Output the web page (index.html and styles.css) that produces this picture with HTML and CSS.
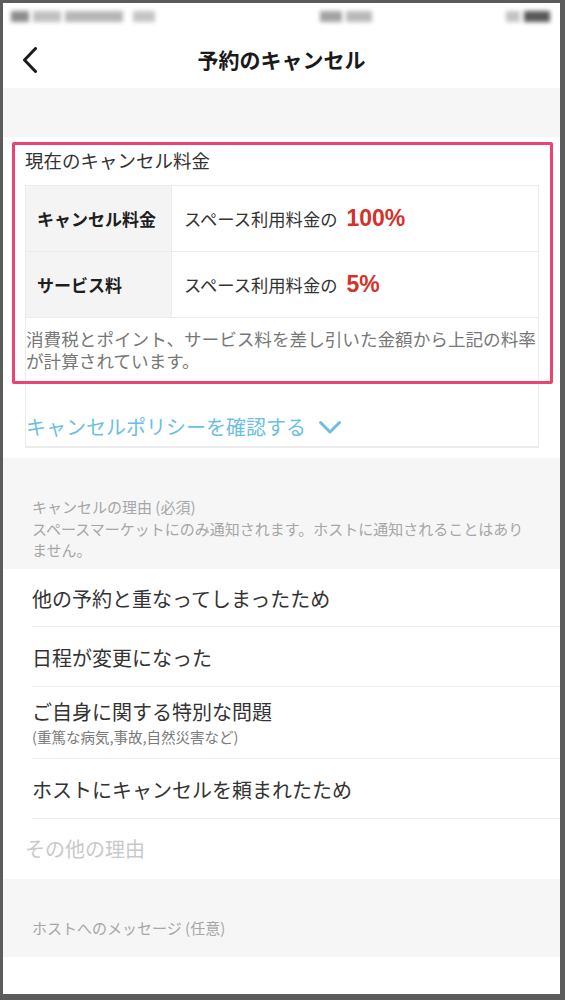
FILE: index.html
```html
<!DOCTYPE html>
<html lang="ja">
<head>
<meta charset="utf-8">
<title>予約のキャンセル</title>
<link rel="stylesheet" href="styles.css">
</head>
<body>
<div class="screen">
  <div class="statusbar">
    <div class="sb-group">
      <span class="blob b1"></span><span class="blob b2"></span><span class="blob b3"></span><span class="blob b4"></span>
    </div>
    <div class="sb-group">
      <span class="blob c1"></span><span class="blob c2"></span>
    </div>
    <div class="sb-group">
      <span class="blob r1"></span><span class="blob r2"></span>
    </div>
  </div>

  <div class="navbar">
    <svg class="back" width="16" height="26" viewBox="0 0 16 26"><path d="M13.5 1.5 L2.5 13 L13.5 24.5" fill="none" stroke="#1c1c1c" stroke-width="3" stroke-linecap="round" stroke-linejoin="round"/></svg>
    <div class="nav-title">予約のキャンセル</div>
  </div>

  <div class="spacer-top"></div>

  <section class="fee-section">
    <h2 class="fee-title">現在のキャンセル料金</h2>
    <div class="fee-box">
      <div class="fee-table">
        <div class="cell label">キャンセル料金</div>
        <div class="cell value">スペース利用料金の<span class="pct">100%</span></div>
        <div class="cell label">サービス料</div>
        <div class="cell value">スペース利用料金の<span class="pct">5%</span></div>
      </div>
      <p class="fee-note">消費税とポイント、サービス料を差し引いた金額から上記の料率が計算されています。</p>
      <div class="policy-link">
        <span>キャンセルポリシーを確認する</span>
        <svg class="chev" width="24" height="15" viewBox="0 0 24 15"><path d="M2.5 2.5 L12 12 L21.5 2.5" fill="none" stroke="#6bbfe3" stroke-width="3" stroke-linecap="round" stroke-linejoin="round"/></svg>
      </div>
    </div>
    <div class="highlight"></div>
  </section>

  <div class="group-header reason-header">
    <div>キャンセルの理由 (必須)</div>
    <div>スペースマーケットにのみ通知されます。ホストに通知されることはありません。</div>
  </div>

  <ul class="reason-list">
    <li class="reason"><span class="reason-text">他の予約と重なってしまったため</span></li>
    <li class="reason"><span class="reason-text">日程が変更になった</span></li>
    <li class="reason tall"><span class="reason-text">ご自身に関する特別な問題</span><span class="reason-sub">(重篤な病気,事故,自然災害など)</span></li>
    <li class="reason"><span class="reason-text">ホストにキャンセルを頼まれたため</span></li>
    <li class="reason other"><span class="placeholder">その他の理由</span></li>
  </ul>

  <div class="group-header message-header">
    <div>ホストへのメッセージ (任意)</div>
  </div>

  <div class="message-area"></div>
</div>
</body>
</html>
```

FILE: styles.css
```css
* { box-sizing: border-box; }

html, body {
  margin: 0;
  padding: 0;
}

body {
  background: #5c5c5c;
  width: 565px;
  height: 1000px;
  overflow: hidden;
  font-family: "Noto Sans CJK JP", "Noto Sans", sans-serif;
  color: #333;
}

.screen {
  margin: 3px 5px 6px 3px;
  width: 557px;
  height: 991px;
  background: #fff;
  display: flex;
  flex-direction: column;
  overflow: hidden;
}

/* status bar (blurred) */
.statusbar {
  height: 27px;
  display: flex;
  justify-content: space-between;
  align-items: center;
  padding: 0 6px 0 8px;
  flex-shrink: 0;
}
.sb-group {
  display: flex;
  align-items: center;
  gap: 4px;
}
.blob {
  display: inline-block;
  height: 11px;
  background: #9a9a9a;
  filter: blur(2.2px);
  opacity: .8;
}
.b1 { width: 18px; background: #707070; }
.b2 { width: 28px; background: #b0b0b0; }
.b3 { width: 58px; background: #a4a4a4; }
.b4 { width: 22px; background: #b6b6b6; margin-left: 6px; }
.c1 { width: 22px; background: #8c8c8c; }
.c2 { width: 26px; background: #a8a8a8; }
.r1 { width: 14px; background: #b4b4b4; }
.r2 { width: 26px; background: #303030; margin-right: 4px; }
.sb-group:nth-child(2) { margin-left: 30px; }

/* navbar */
.navbar {
  height: 58px;
  position: relative;
  display: flex;
  align-items: center;
  justify-content: center;
  flex-shrink: 0;
}
.back {
  position: absolute;
  left: 19px;
  top: 17px;
}
.nav-title {
  font-size: 21px;
  font-weight: 700;
  color: #1a1a1a;
}

.spacer-top {
  height: 49px;
  background: #f6f6f6;
  flex-shrink: 0;
}

/* fee section */
.fee-section {
  position: relative;
  padding: 10px 21px 10px 22px;
  background: #fff;
  flex-shrink: 0;
}
.fee-title {
  margin: 0 0 12px 0;
  font-size: 18.5px;
  font-weight: 400;
  line-height: 26px;
  color: #333;
}
.fee-box {
  border: 1px solid #ececec;
  border-bottom-width: 2px;
}
.fee-table {
  display: grid;
  grid-template-columns: 146px 1fr;
}
.cell {
  height: 66px;
  display: flex;
  align-items: center;
  border-bottom: 1.5px solid #ececec;
  font-size: 17px;
}
.label {
  background: #f4f4f4;
  font-weight: 700;
  color: #1e1e1e;
  padding-left: 11px;
  border-right: 1.5px solid #ececec;
}
.value {
  padding-left: 12px;
  color: #333;
  font-size: 17.3px;
}
.pct {
  color: #d3332b;
  font-weight: 700;
  font-size: 23px;
  margin-left: 9px;
  font-family: "Liberation Sans", "Noto Sans", sans-serif;
}
.fee-note {
  margin: 0;
  padding: 10px 0 0 0;
  font-size: 17.6px;
  line-height: 22px;
  color: #777;
}
.policy-link {
  display: flex;
  align-items: center;
  height: 30px;
  margin-top: 39px;
  margin-bottom: 5px;
  color: #6bbfe3;
  font-size: 20px;
  gap: 12px;
}
.chev { margin-top: 2px; }

.highlight {
  position: absolute;
  left: 9px;
  top: 5px;
  width: 541px;
  height: 242px;
  border: 3px solid #ec4470;
  border-radius: 2px;
  pointer-events: none;
}

/* grey headers */
.group-header {
  background: #f6f6f6;
  color: #a6a6a6;
  font-size: 15px;
  line-height: 21.5px;
  padding: 38px 25px 8px 29px;
  flex-shrink: 0;
}
.message-header {
  padding: 38px 25px 19px 29px;
}

/* reason list */
.reason-list {
  list-style: none;
  margin: 0;
  padding: 0;
  background: #fff;
  flex-shrink: 0;
}
.reason {
  margin-left: 29px;
  height: 60px;
  display: flex;
  flex-direction: column;
  justify-content: center;
  padding-top: 4px;
  border-bottom: 1px solid #efefef;
}
.reason:first-child { height: 58px; }
.reason.tall {
  height: 72px;
  justify-content: flex-start;
  padding-top: 11px;
}
.reason-text {
  font-size: 20px;
  line-height: 28px;
  color: #333;
}
.reason-sub {
  font-size: 14.5px;
  line-height: 20px;
  color: #7a7a7a;
  margin-top: 1px;
}
.reason.other {
  margin-left: 22px;
  border-bottom: none;
  padding-top: 0;
}
.placeholder {
  font-size: 20px;
  line-height: 28px;
  color: #c9c9c9;
}

.message-area {
  flex: 1;
  background: #fff;
}
```
